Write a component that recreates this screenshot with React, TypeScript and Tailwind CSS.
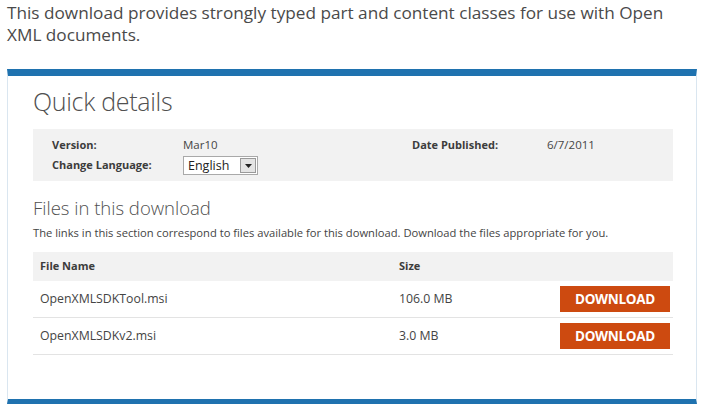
import React from "react";

const font = { fontFamily: '"Open Sans", "Noto Sans", Arial, sans-serif' };

function Row({ name, size }: { name: string; size: string }) {
  return (
    <div className="flex items-center h-[37px] border-b border-[#e3e3e3] text-[12.3px] text-[#444]">
      <div className="w-[366px] pl-[7px]">{name}</div>
      <div className="flex-1">{size}</div>
      <button className="w-[110px] h-[26px] mr-[3px] bg-[#cd4a10] text-white font-bold text-[13.5px] tracking-[-0.3px]">
        DOWNLOAD
      </button>
    </div>
  );
}

export default function App() {
  return (
    <div className="w-[704px] h-[410px] bg-white overflow-hidden text-[#454545]" style={font}>
      <p className="px-[7px] pt-[2px] text-[17.2px] leading-[22px] text-[#4a4a4a]">
        This download provides strongly typed part and content classes for use with Open XML documents.
      </p>
      <div className="mt-[23px] mx-[7px] h-[335px] border-t-[7px] border-b-[5px] border-t-[#1f72af] border-b-[#1f72af] border-x border-x-[#dae6f0]">
        <div className="pl-[25px] pr-[23px]">
          <h1 className="pt-[10px] text-[25px] leading-[30px] font-light text-[#505050] tracking-[-0.3px]">
            Quick details
          </h1>
          <div className="mt-[13px] h-[52px] bg-[#f2f2f2] text-[11.5px] flex pt-[6px]">
            <div className="pl-[19px] w-[150px] font-bold text-[11px] text-[#3c3c3c] leading-[20px]">
              <div>Version:</div>
              <div>Change Language:</div>
            </div>
            <div className="w-[229px] leading-[20px]">
              <div>Mar10</div>
              <div className="mt-[1px] w-[75px] h-[19px] border border-[#a9a9a9] bg-white flex items-center text-[12.5px] text-[#222]">
                <span className="flex-1 pl-[4px] leading-[17px]">English</span>
                <span className="w-[16px] h-[15px] mr-[1px] bg-[#e4e4e4] border border-[#9a9a9a] flex items-center justify-center">
                  <svg width="7" height="4" viewBox="0 0 7 4"><path d="M0 0h7L3.5 4z" fill="#222" /></svg>
                </span>
              </div>
            </div>
            <div className="w-[135px] font-bold text-[11px] text-[#3c3c3c] leading-[20px]">Date Published:</div>
            <div className="leading-[20px]">6/7/2011</div>
          </div>
          <h2 className="mt-[15px] text-[18.5px] leading-[24px] font-light text-[#505050]">Files in this download</h2>
          <p className="mt-[5px] text-[11.2px] leading-[16px] text-[#444]">
            The links in this section correspond to files available for this download. Download the files appropriate for you.
          </p>
          <div className="mt-[11px]">
            <div className="flex items-center h-[29px] bg-[#f2f2f2] text-[11px] font-bold text-[#3c3c3c]">
              <div className="w-[366px] pl-[7px]">File Name</div>
              <div>Size</div>
            </div>
            <Row name="OpenXMLSDKTool.msi" size="106.0 MB" />
            <Row name="OpenXMLSDKv2.msi" size="3.0 MB" />
          </div>
        </div>
      </div>
    </div>
  );
}
